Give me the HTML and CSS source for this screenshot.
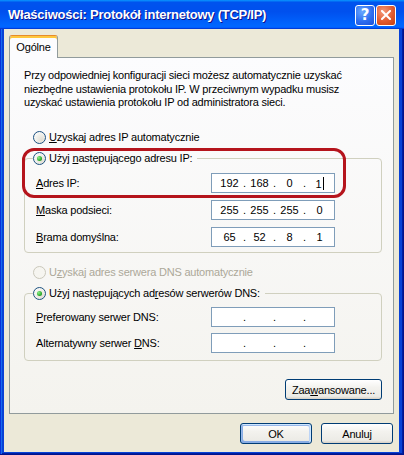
FILE: index.html
```html
<!DOCTYPE html>
<html lang="pl">
<head>
<meta charset="utf-8">
<title>Właściwości: Protokół internetowy (TCP/IP)</title>
<link rel="stylesheet" href="styles.css">
</head>
<body>
<div class="window">
  <div class="titlebar">
    <span class="title">Właściwości: Protokół internetowy (TCP/IP)</span>
    <div class="title-buttons">
      <span class="tb-btn help">?</span>
      <span class="tb-btn close"><svg width="10" height="10" viewBox="0 0 10 10"><path d="M1 1 L9 9 M9 1 L1 9" stroke="#fff" stroke-width="2" stroke-linecap="square"/></svg></span>
    </div>
  </div>
  <div class="frame">
    <div class="tabs"><span class="tab">Ogólne</span></div>
    <div class="panel">
      <p class="intro">Przy odpowiedniej konfiguracji sieci możesz automatycznie uzyskać<br>niezbędne ustawienia protokołu IP. W przeciwnym wypadku musisz<br>uzyskać ustawienia protokołu IP od administratora sieci.</p>

      <div class="option first"><span class="radio"></span><span><u>U</u>zyskaj adres IP automatycznie</span></div>

      <fieldset class="group g1">
        <legend><span class="radio checked"></span><span>Użyj <u>n</u>astępującego adresu IP:</span></legend>
        <div class="rows">
          <span class="label"><u>A</u>dres IP:</span>
          <div class="ip"><span class="oct">192</span><span class="dot">.</span><span class="oct">168</span><span class="dot">.</span><span class="oct">0</span><span class="dot">.</span><span class="oct">1<span class="caret"></span></span></div>
          <span class="label"><u>M</u>aska podsieci:</span>
          <div class="ip"><span class="oct">255</span><span class="dot">.</span><span class="oct">255</span><span class="dot">.</span><span class="oct">255</span><span class="dot">.</span><span class="oct">0</span></div>
          <span class="label"><u>B</u>rama domyślna:</span>
          <div class="ip"><span class="oct">65</span><span class="dot">.</span><span class="oct">52</span><span class="dot">.</span><span class="oct">8</span><span class="dot">.</span><span class="oct">1</span></div>
        </div>
      </fieldset>

      <div class="option disabled dns-auto"><span class="radio"></span><span>U<u>z</u>yskaj adres serwera DNS automatycznie</span></div>

      <fieldset class="group g2">
        <legend><span class="radio checked"></span><span>Użyj następujących ad<u>r</u>esów serwerów DNS:</span></legend>
        <div class="rows">
          <span class="label"><u>P</u>referowany serwer DNS:</span>
          <div class="ip"><span class="oct"></span><span class="dot">.</span><span class="oct"></span><span class="dot">.</span><span class="oct"></span><span class="dot">.</span><span class="oct"></span></div>
          <span class="label">Alternatywny serwer <u>D</u>NS:</span>
          <div class="ip"><span class="oct"></span><span class="dot">.</span><span class="oct"></span><span class="dot">.</span><span class="oct"></span><span class="dot">.</span><span class="oct"></span></div>
        </div>
      </fieldset>

      <div class="advanced-row"><button class="btn adv">Zaa<u>w</u>ansowane...</button></div>
    </div>
    <div class="actions">
      <button class="btn default">OK</button>
      <button class="btn">Anuluj</button>
    </div>
  </div>
  <div class="highlight"></div>
</div>
</body>
</html>
```
FILE: styles.css
```css
* { box-sizing: border-box; }

body {
  margin: 0;
  background: #ffffff;
  font-family: "Liberation Sans", Arial, sans-serif;
  font-size: 11px;
  letter-spacing: -0.2px;
  color: #000;
}

.window {
  position: relative;
  width: 404px;
  height: 455px;
  display: flex;
  flex-direction: column;
  background: #0842d6;
  box-shadow: inset -1px -1px #00138c, inset 1px 0 #0831d9, inset 2px 0 #166aee, inset -2px -2px #001ea0;
}

.titlebar {
  flex: none;
  height: 29px;
  display: flex;
  align-items: center;
  padding: 0 8px 0 8px;
  background: linear-gradient(180deg, #0997ff, #0053ee 8%, #0050ee 40%, #0066ff 88%, #0066ff 93%, #005bff 95%, #003dd7 96%, #003dd7);
}

.title {
  flex: 1;
  color: #fff;
  font-family: "Liberation Sans", Arial, sans-serif;
  font-weight: bold;
  font-size: 13px;
  letter-spacing: -0.25px;
  text-shadow: 1px 1px #0f1089;
  white-space: nowrap;
}

.title-buttons {
  display: flex;
  gap: 1px;
  padding-top: 1px;
}

.tb-btn {
  width: 20px;
  height: 21px;
  border: 1px solid #fff;
  border-radius: 3px;
  display: flex;
  align-items: center;
  justify-content: center;
}

.help {
  background: radial-gradient(circle at 35% 30%, #6aa8ff, #2e6ef0 55%, #1b4fd8);
  color: #fff;
  font-family: "DejaVu Sans", sans-serif;
  font-weight: bold;
  font-size: 15px;
  line-height: 1;
  letter-spacing: 0;
}

.close {
  background: radial-gradient(circle at 35% 30%, #f59a7a, #e05a2f 55%, #c8400f);
}

.frame {
  flex: 1;
  margin: 0 5px 3px 4px;
  background: #ece9d8;
  padding: 6px 5px 8px 5px;
  display: flex;
  flex-direction: column;
}

.tabs {
  flex: none;
  height: 23px;
  display: flex;
  position: relative;
  z-index: 1;
}

.tab {
  width: 49px;
  height: 23px;
  background: #fcfcfe;
  border: 1px solid #919b9c;
  border-top: 1px solid #e68b2c;
  border-bottom: none;
  border-radius: 3px 3px 0 0;
  box-shadow: inset 0 2px #ffc73c;
  padding-top: 4px;
  text-align: center;
  line-height: 14px;
}

.panel {
  flex: 1;
  margin-top: -1px;
  border: 1px solid #919b9c;
  background: linear-gradient(180deg, #fcfcfe, #f4f3ee);
  padding: 11px 11px 0 14px;
  display: flex;
  flex-direction: column;
}

.intro {
  margin: 0;
  line-height: 13.5px;
  white-space: nowrap;
}

.option {
  height: 16px;
  display: flex;
  align-items: center;
  gap: 3px;
  padding-left: 9px;
}

.option.first { margin-top: 19.5px; }
.option.dns-auto { margin-top: 11px; }

.disabled { color: #aca899; }

.radio {
  flex: none;
  width: 13px;
  height: 13px;
  border-radius: 50%;
  border: 1px solid #1c5180;
  background: radial-gradient(circle at 70% 70%, #e0ded4, #f4f4f0 60%, #ffffff);
  display: inline-flex;
  align-items: center;
  justify-content: center;
}

.disabled .radio {
  border-color: #cac8bb;
  background: #f6f5f0;
}

.radio.checked::after {
  content: "";
  width: 5px;
  height: 5px;
  border-radius: 50%;
  background: radial-gradient(circle at 35% 35%, #8af08a, #21a121 70%, #1a8a1a);
}

.group {
  margin: 5px 0 0 0;
  padding: 0 0 5px 0;
  border: 1px solid #d0d0bf;
  border-radius: 4px;
  min-width: 0;
}

.group legend {
  margin-left: 8px;
  padding: 0 5px 0 0;
  height: 16px;
  display: flex;
  align-items: center;
  gap: 3px;
}

.rows {
  display: grid;
  grid-template-columns: 175px 124px;
  row-gap: 7px;
  padding: 7px 0 0 11px;
  align-items: center;
}

.g2 { padding-bottom: 7px; }
.g2 .rows { padding-top: 6px; row-gap: 6px; }

.ip {
  height: 20px;
  border: 1px solid #7f9db9;
  background: #fff;
  display: flex;
  align-items: center;
  padding-left: 4px;
  letter-spacing: 0;
}

.oct {
  width: 27px;
  text-align: center;
  white-space: nowrap;
}

.dot {
  width: 3px;
  text-align: center;
}

.caret {
  display: inline-block;
  width: 1px;
  height: 13px;
  background: #000;
  vertical-align: -2px;
  margin-left: 1px;
}

.advanced-row {
  margin-top: 18px;
  display: flex;
  justify-content: flex-end;
}

.btn {
  height: 21px;
  border: 1px solid #003c74;
  border-radius: 3px;
  background: linear-gradient(180deg, #ffffff, #f3f2ee 40%, #ecebe6 86%, #d6d0c5);
  font-family: "Liberation Sans", Arial, sans-serif;
  font-size: 11px;
  letter-spacing: -0.2px;
  color: #000;
  padding: 0;
}

.btn.adv { width: 97px; }

.actions {
  flex: none;
  margin-top: 9px;
  display: flex;
  justify-content: flex-end;
  gap: 9px;
  padding-right: 1px;
}

.actions .btn { width: 72px; }

.btn.default {
  box-shadow: inset -1px 1px #cee7ff, inset 1px 2px #98b8ea, inset -2px 2px #bcd4f6, inset 1px -1px #89ade4, inset 2px -2px #89ade4;
}

.highlight {
  position: absolute;
  left: 22px;
  top: 148px;
  width: 324px;
  height: 50px;
  border: 3px solid #b5141c;
  border-radius: 12px;
  pointer-events: none;
}
```
